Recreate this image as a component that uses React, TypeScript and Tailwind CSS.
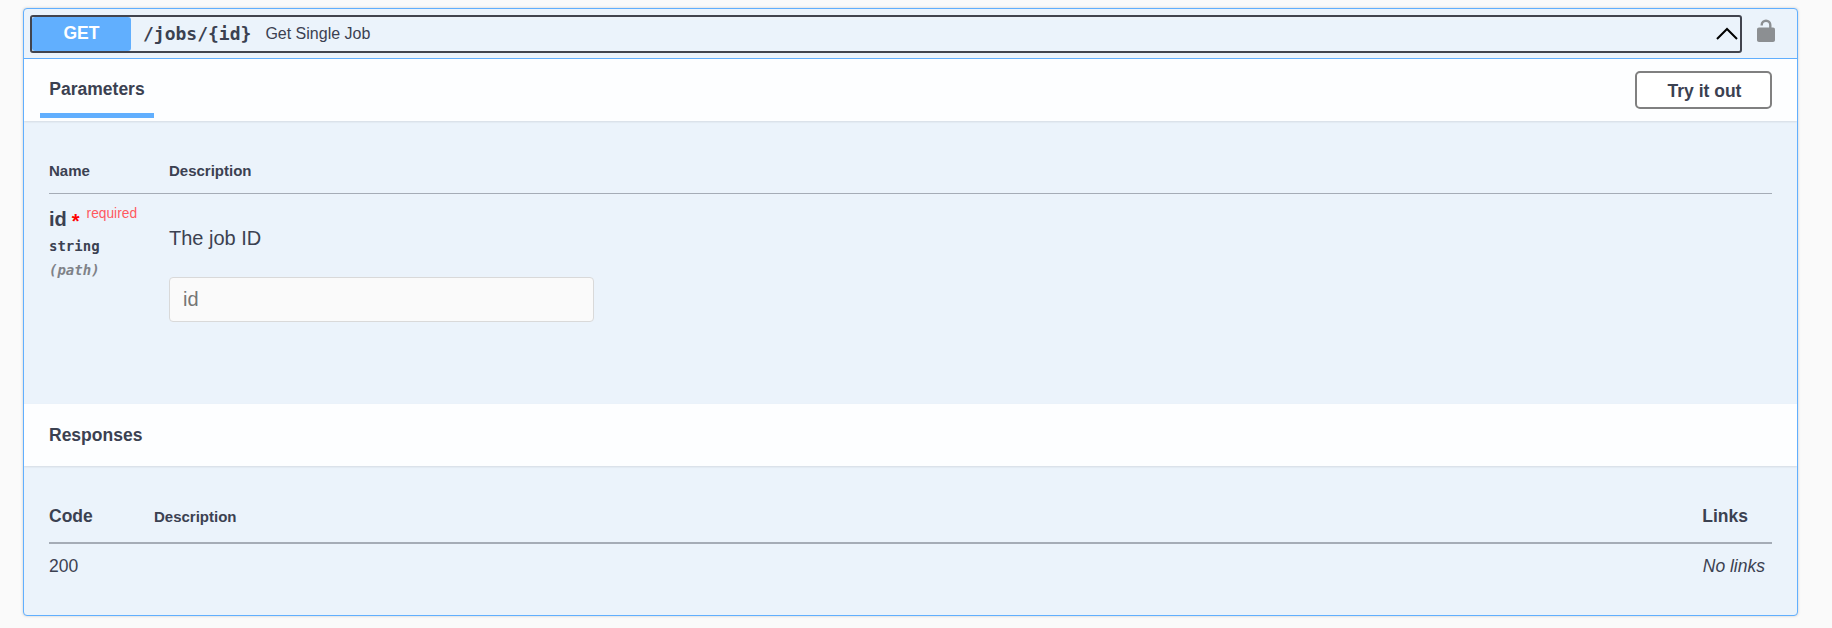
const sans = "font-['Liberation_Sans',Arial,sans-serif]";
const mono = "font-['DejaVu_Sans_Mono',monospace]";

function LockIcon() {
  return (
    <svg viewBox="0 0 18 23" className="h-[23px] w-[18px] fill-[#8c8f92]">
      <path d="M3.5 6.500V6a5.500 5.500 0 0 1 11 0v3h-2.400V6a3.100 3.100 0 0 0-6.200 0v.5h-2.400z" />
      <path d="M2 8.500h14c1.200 0 2 .8 2 2V21c0 1.200-.8 2-2 2H2c-1.200 0-2-.8-2-2V10.500c0-1.200.8-2 2-2z" />
    </svg>
  );
}

function Chevron() {
  return (
    <svg viewBox="0 0 22 13" className="h-[13px] w-[22px] fill-none stroke-black stroke-2">
      <path d="M1 12 11 2l10 10" />
    </svg>
  );
}

function SectionBar({ children }: { children: React.ReactNode }) {
  return <div className="flex items-center justify-between bg-[#fdfeff] shadow-[0_1px_2px_rgba(0,0,0,0.1)]">{children}</div>;
}

export default function App() {
  return (
    <div className={`${sans} min-h-[628px] bg-[#fafafa] pl-[23px] pr-[34px] pt-2 text-[#3b4151]`}>
      <div className="overflow-hidden rounded-[4px] border border-[#61affe] bg-[#ebf3fb] shadow-[0_0_3px_rgba(0,0,0,0.19)]">
        {/* summary */}
        <div className="flex h-[50px] items-center border-b border-[#61affe] pl-[6px] pr-[22px]">
          <div className="flex h-[38px] flex-1 items-center rounded-[3px] border-2 border-[#41444e] pr-[2px]">
            <span className="flex h-[34px] w-[99px] items-center justify-center rounded-[3px] bg-[#61affe] text-[17.5px] font-bold text-white">GET</span>
            <span className={`${mono} ml-[12px] text-[18px] font-bold`}>/jobs/&#123;id&#125;</span>
            <span className="ml-[14px] text-base text-[#3b4151]">Get Single Job</span>
            <span className="ml-auto flex items-center"><Chevron /></span>
          </div>
          <span className="mb-[6px] ml-[15px] flex"><LockIcon /></span>
        </div>

        {/* parameters */}
        <SectionBar>
          <div className="mb-[3px] ml-4 flex h-[59px] w-[114px] items-center justify-center border-b-[5px] border-[#61affe] pt-[6px] text-[17.5px] font-bold">Parameters</div>
          <button className="mr-[25px] h-[38px] w-[137px] rounded-[5px] border-2 border-[#808080] bg-white pl-[2px] pt-[2px] text-[17.5px] font-bold text-[#3b4151]">Try it out</button>
        </SectionBar>
        <div className="h-[283px] px-[25px] pt-[39px]">
          <div className="flex h-[34px] items-start border-b border-[#3b4151]/40 text-[15px] font-bold">
            <div className="w-[120px]">Name</div>
            <div>Description</div>
          </div>
          <div className="flex pt-[13px]">
            <div className="w-[120px]">
              <div className="flex items-start">
                <span className="text-[20px] font-bold leading-[24px]">id</span>
                <span className="ml-[5px] text-[20px] font-bold leading-[28px] text-[#ff0000]">*</span>
                <span className="-mt-[2px] ml-[7px] text-[13.75px] leading-[18px] text-[#ff5a5f]">required</span>
              </div>
              <div className={`${mono} mt-[2px] text-[14px] font-bold leading-[18px]`}>string</div>
              <div className={`${mono} mt-[6px] text-[14px] font-bold italic leading-[18px] text-[#7f8288]`}>(path)</div>
            </div>
            <div>
              <p className="pt-[17px] text-[20px] leading-[28px]">The job ID</p>
              <input
                placeholder="id"
                readOnly
                className="mt-[25px] h-[45px] w-[425px] rounded-[4px] border border-[#d9d9d9] bg-[#fafafa] px-[13px] text-[20px] placeholder:text-[#757575]"
              />
            </div>
          </div>
        </div>

        {/* responses */}
        <SectionBar>
          <div className="flex h-[62px] items-center pl-[25px] text-[17.5px] font-bold">Responses</div>
        </SectionBar>
        <div className="h-[149px] px-[25px] pt-[38px]">
          <div className="flex h-[40px] items-start justify-between border-b-2 border-[#3b4151]/40 pr-[24px]">
            <div className="flex items-baseline">
              <span className="w-[105px] text-[17.5px] font-bold leading-[24px]">Code</span>
              <span className="text-[15px] font-bold">Description</span>
            </div>
            <span className="text-[17.5px] font-bold leading-[24px]">Links</span>
          </div>
          <div className="flex items-center justify-between pr-[7px] pt-[10px] text-[17.5px] leading-[24px]">
            <span className="text-[#3b4151]">200</span>
            <span className="italic">No links</span>
          </div>
        </div>
      </div>
    </div>
  );
}
